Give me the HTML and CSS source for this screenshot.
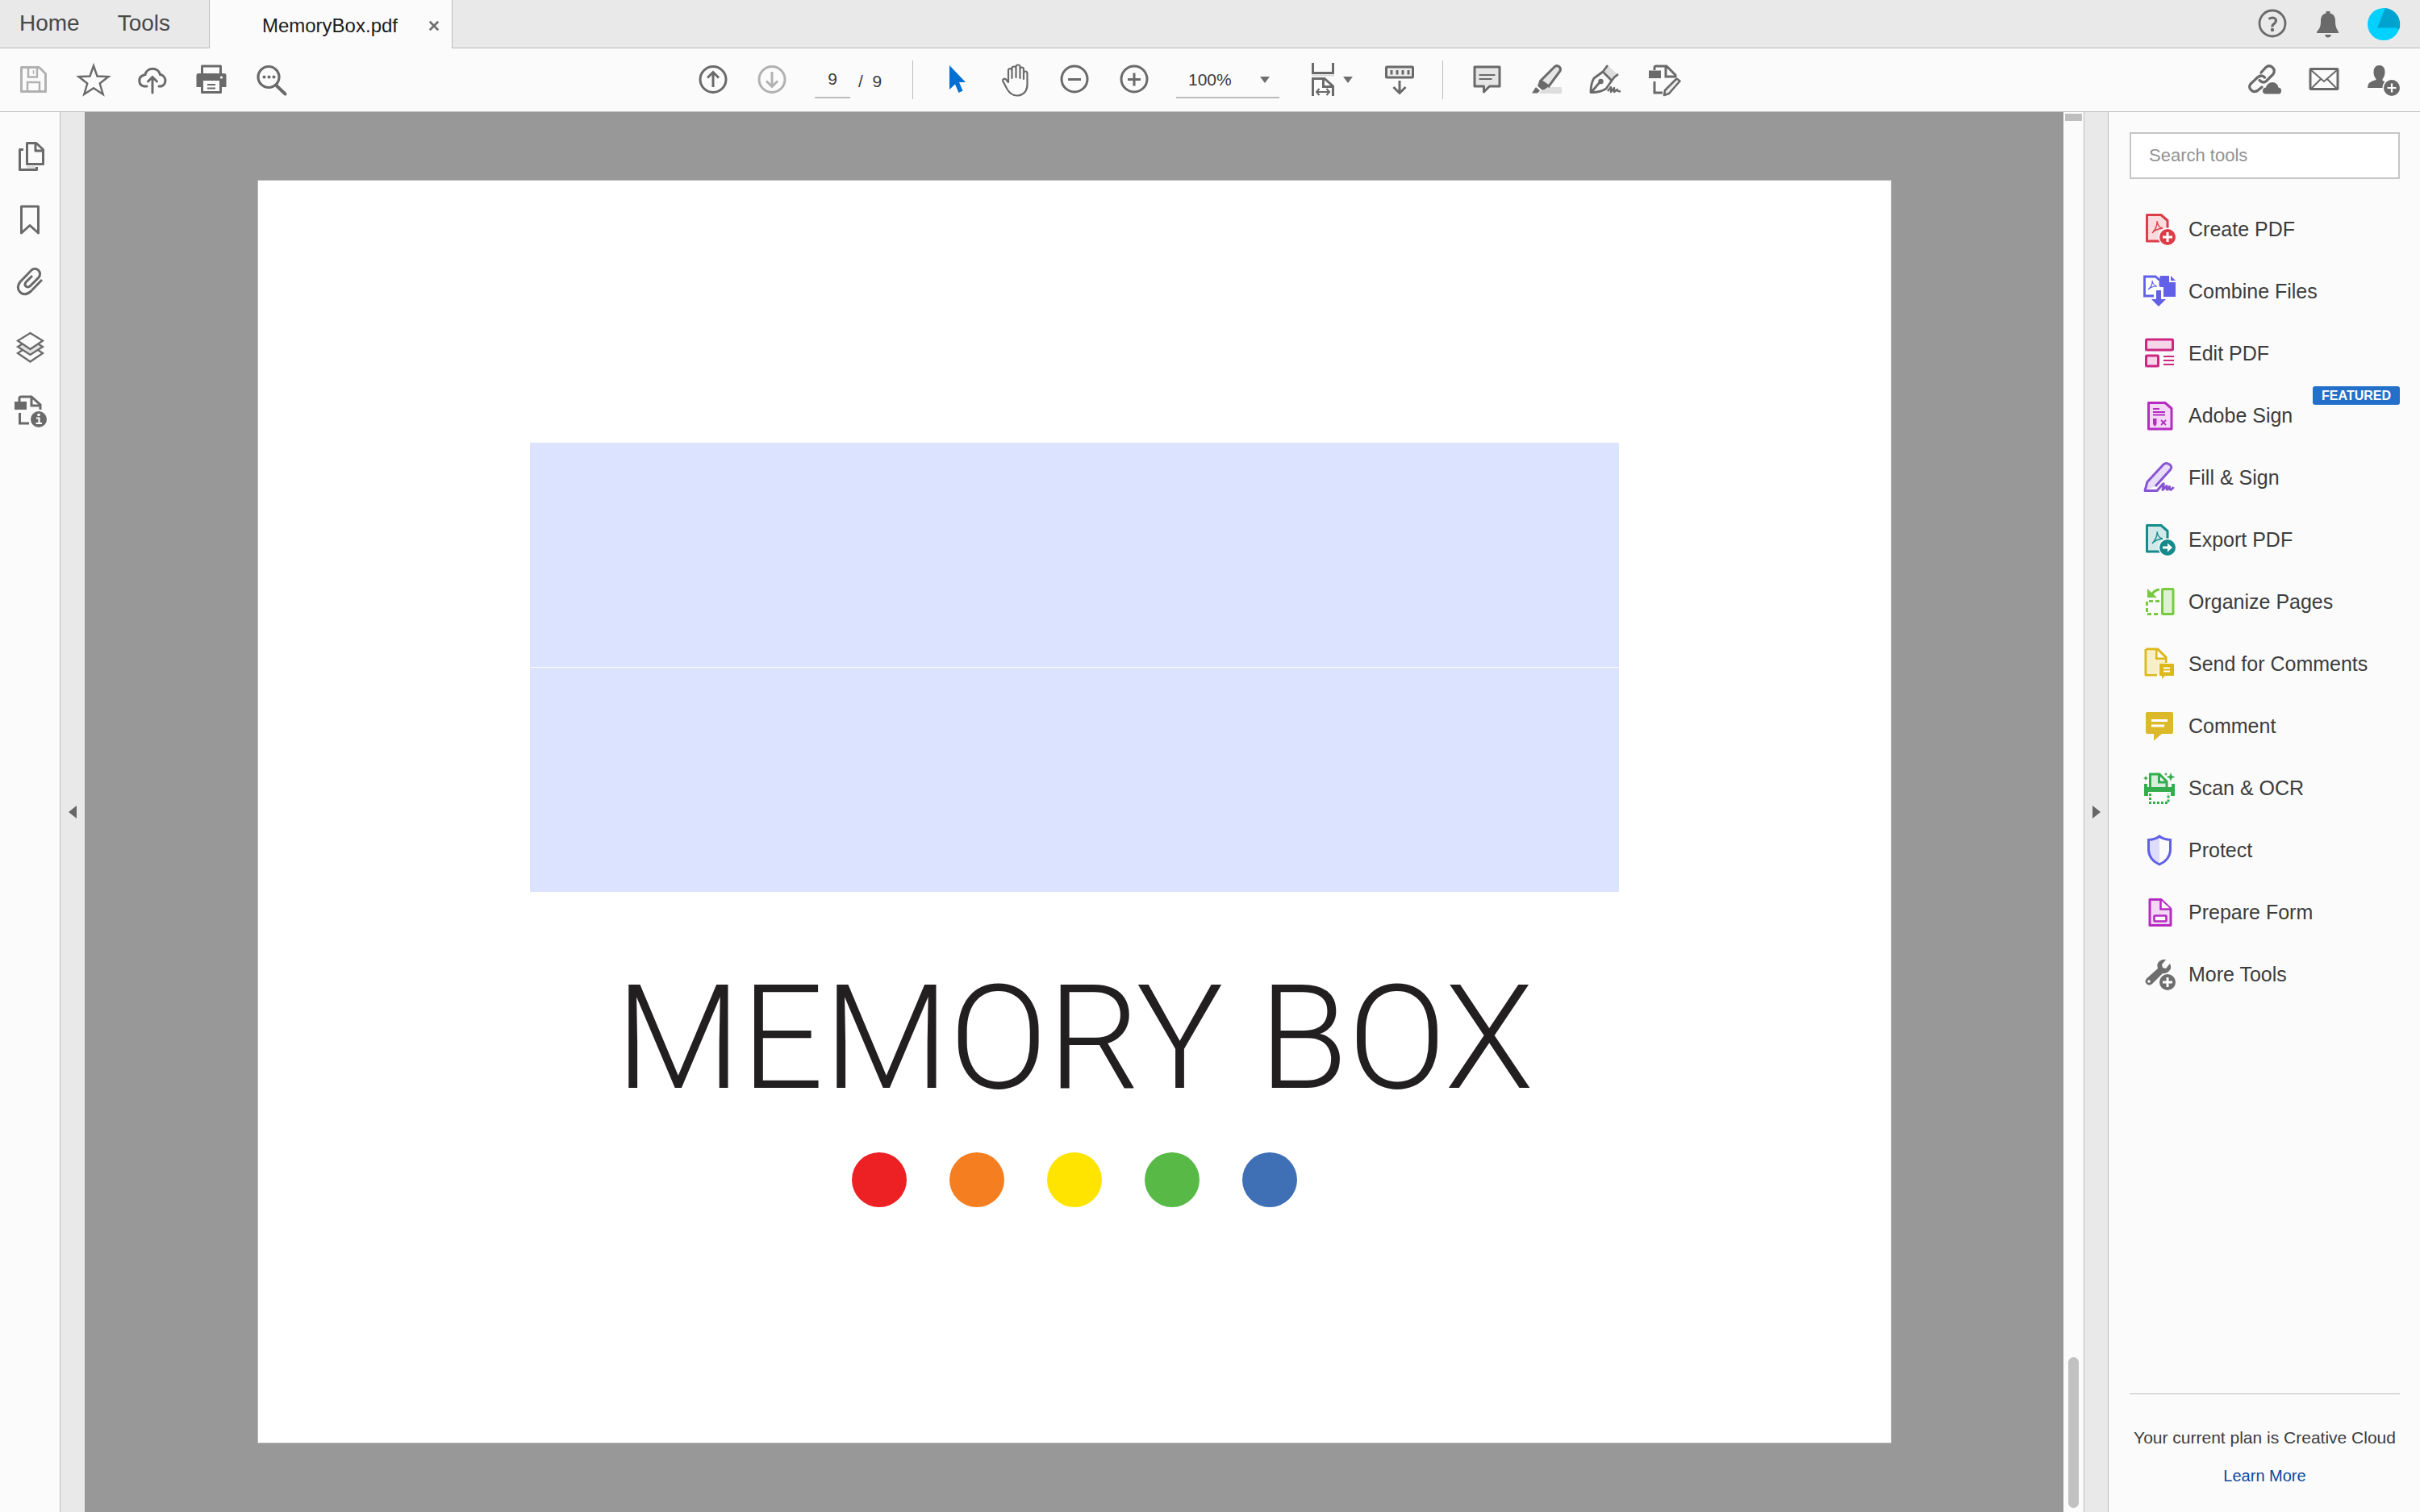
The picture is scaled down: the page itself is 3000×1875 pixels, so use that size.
FILE: index.html
```html
<!DOCTYPE html>
<html lang="en">
<head>
    <meta charset="UTF-8">
    <meta name="viewport" content="width=device-width, initial-scale=1.0">
    <title>MemoryBox.pdf</title>
    <link rel="stylesheet" href="styles.css">
</head>
<body>

    <!-- Tab bar -->
    <header class="tabbar">
        <nav class="tabs">
            <a href="#" class="tab-link">Home</a>
            <a href="#" class="tab-link">Tools</a>
        </nav>
        <div class="tab-file">
            <span>MemoryBox.pdf</span>
            <button class="tab-close" aria-label="Close">
                <svg width="14" height="14" viewBox="0 0 12 12"><path d="M1.500 1.500l9 9M10.500 1.500l-9 9" stroke="#6e6e6e" stroke-width="2.300"/></svg>
            </button>
        </div>
        <div class="account">
            <button class="icon" aria-label="Help">
                <svg viewBox="0 0 40 40"><circle cx="20" cy="19" r="16" fill="none" stroke="currentColor" stroke-width="2.800"/><path d="M15.500 13.500q4-2.500 7-1t1.500 4.500q-.5 1.500-2.500 3t-1.500 3.500" fill="none" stroke="currentColor" stroke-width="3"/><circle cx="20" cy="27" r="2.200" fill="currentColor"/></svg>
            </button>
            <button class="icon" aria-label="Notifications">
                <svg viewBox="0 0 40 40"><path d="M17.500 4h5v2.500c5 1 6.500 5 6.500 9.500 0 8 2 10 4 13.500V31H6v-1.500c3-3.500 5-5.500 5-13.500 0-4.500 1.500-8.500 6.500-9.500zM16 33h8q-1 3.500-4 3.500T16 33z" fill="currentColor"/></svg>
            </button>
            <button class="icon" aria-label="Profile">
                <svg viewBox="0 0 40 40"><circle cx="20" cy="20" r="20" fill="#00d1ff"/><path d="M22 .1A20 20 0 0 1 39 27q-2-3-5-2.500H12z" fill="#00a3cf"/></svg>
            </button>
        </div>
    </header>

    <!-- Toolbar -->
    <div class="toolbar">
        <div class="group group-file">
            <button class="icon dim" aria-label="Save">
                <svg viewBox="0 0 40 40" fill="none" stroke="currentColor" stroke-width="3"><path d="M4.500 4.500h22l8 8v22h-30z" stroke-linejoin="round"/><path d="M13 5v11.500h11V5M12 34v-11h15v11" stroke-width="2.500"/><path d="M19.500 8v5" stroke-width="1.500"/></svg>
            </button>
            <button class="icon" aria-label="Star">
                <svg viewBox="0 0 40 40"><path d="M20 2.500l4.500 13 14 .5-10.800 8.500 4 13.500L20 30.300 8.300 38l4-13.500L1.500 16l14-.5z" fill="none" stroke="currentColor" stroke-width="2.400"/></svg>
            </button>
            <button class="icon" aria-label="Upload">
                <svg viewBox="0 0 40 40" fill="none" stroke="currentColor" stroke-width="3" stroke-linecap="round"><path d="M12 28H8.500a7 7 0 0 1-1-13.500q1.500-1 2.500-1a9.500 9.500 0 0 1 18.500 0 7.500 7.500 0 0 1 1.500 14.500H27"/><path d="M19 36V17M13.500 22L19 16.500l5.500 5.500"/></svg>
            </button>
            <button class="icon" aria-label="Print">
                <svg viewBox="0 0 40 40"><path d="M6.500 13V3h23v10" fill="none" stroke="currentColor" stroke-width="3" stroke-linejoin="round"/><path d="M2 12h32q2.500 0 2.500 2.500V29H31v-8H6v8H-.5V14.500Q-.5 12 2 12z" fill="currentColor"/><path d="M6.500 21v14.500h23V21" fill="#fbfbfb" stroke="currentColor" stroke-width="3" stroke-linejoin="round"/><path d="M13 26h10M13 30.500h10" stroke="currentColor" stroke-width="1.800"/><circle cx="30.500" cy="17" r="1.600" fill="#fff"/></svg>
            </button>
            <button class="icon" aria-label="Find">
                <svg viewBox="0 0 40 40"><circle cx="15" cy="16.500" r="13" fill="none" stroke="currentColor" stroke-width="3.200"/><path d="M24.500 27l11 10.500" stroke="currentColor" stroke-width="4" stroke-linecap="round"/><g fill="currentColor"><circle cx="9.500" cy="16.500" r="2"/><circle cx="15.500" cy="16.500" r="2"/><circle cx="21.500" cy="16.500" r="2"/></g></svg>
            </button>
        </div>

        <div class="group group-view">
            <button class="icon" aria-label="Previous page">
                <svg viewBox="0 0 40 40" fill="none" stroke="currentColor" stroke-width="3"><circle cx="20" cy="19.500" r="16"/><path d="M20 29V11M13 17.500l7-7 7 7"/></svg>
            </button>
            <button class="icon dim" aria-label="Next page">
                <svg viewBox="0 0 40 40" fill="none" stroke="currentColor" stroke-width="3"><circle cx="20" cy="19.500" r="16"/><path d="M20 10v18M13 21.500l7 7 7-7"/></svg>
            </button>
            <div class="pager">
                <input type="text" value="9" aria-label="Page number">
                <span>/&nbsp; 9</span>
            </div>
            <i class="sep"></i>
            <button class="icon" aria-label="Select">
                <svg viewBox="0 0 40 40"><path d="M11 2l20 21h-8l4.500 10.500-5 2.500L18 25.500 11 32z" fill="#0070d2"/></svg>
            </button>
            <button class="icon" aria-label="Hand">
                <svg viewBox="0 0 40 40"><path d="M11 23V8.500q0-2.500 2-2.500t2.500 2.500V18V6q0-2.500 2.500-2.500T20.500 6v11V4q0-2.500 2.500-2.500T25.500 4v14V7q0-2.500 2.200-2.500T30 7v12V12q0-2.500 2.200-2.500t2.300 2.500v14c0 9-6 13.500-13 13.500-6 0-9-3-12-8L4.500 22c-1.500-3 2-4.500 4-2z" fill="none" stroke="currentColor" stroke-width="2.200" stroke-linejoin="round"/></svg>
            </button>
            <button class="icon" aria-label="Zoom out">
                <svg viewBox="0 0 40 40" fill="none" stroke="currentColor" stroke-width="3"><circle cx="20" cy="19" r="16"/><path d="M12 19.500h16"/></svg>
            </button>
            <button class="icon" aria-label="Zoom in">
                <svg viewBox="0 0 40 40" fill="none" stroke="currentColor" stroke-width="3"><circle cx="21" cy="19" r="16"/><path d="M13 19.500h16M21 11.500v16"/></svg>
            </button>
            <div class="zoom">
                <select aria-label="Zoom level"><option>100%</option></select>
                <svg class="caret" width="12" height="8" viewBox="0 0 12 8"><path d="M0 0h12L6 8z" fill="#6e6e6e"/></svg>
            </div>
            <button class="fit" aria-label="Fit width">
                <svg width="40" height="44" viewBox="0 0 40 44"><g fill="none" stroke="#6a6a6a" stroke-width="3"><path d="M8.500 1v12.500h25V1M8.500 42V20.500H23l10.500 9.500v12M21.500 21v9.500h12"/><path d="M13 37h16M16.500 33L13 37l3.500 4M25.500 33l3.500 4-3.500 4" stroke-width="2"/></g><path d="M7 15.500h28v2H7z" fill="#ddd"/></svg>
                <svg width="12" height="8" viewBox="0 0 12 8"><path d="M0 0h12L6 8z" fill="#6e6e6e"/></svg>
            </button>
            <button class="icon" aria-label="Scroll mode">
                <svg viewBox="0 0 40 40"><rect x="4.500" y="4" width="33" height="13" rx="1" fill="#eee" stroke="currentColor" stroke-width="3"/><path d="M11 8v5.500M18 8v5.500M25 8v5.500M32 8v5.500" stroke="currentColor" stroke-width="3"/><path d="M21 21v15M13.500 29l7.500 7.500 7.500-7.500" fill="none" stroke="currentColor" stroke-width="3"/></svg>
            </button>
            <i class="sep"></i>
            <button class="icon" aria-label="Comment">
                <svg viewBox="0 0 40 40"><path d="M5 4h31v24H23.500l-7 7v-7H5z" fill="#e6e6e6" stroke="currentColor" stroke-width="3" stroke-linejoin="round"/><path d="M10.500 14h20M10.500 19h16" stroke="currentColor" stroke-width="2"/></svg>
            </button>
            <button class="icon" aria-label="Highlight">
                <svg viewBox="0 0 40 40"><path d="M18 29h22v8H12z" fill="#ddd"/><path d="M31 4q2.500-2.500 5.500-.5T38 9L24 28l-10-7z" fill="#e6e6e6" stroke="currentColor" stroke-width="3"/><path d="M12.500 20.500l11 8-5 3.500-3 .5-5.500-5zM8 29l5 4.500-3 3H3z" fill="currentColor"/></svg>
            </button>
            <button class="icon" aria-label="Sign">
                <svg viewBox="0 0 40 40"><path d="M24 2l12 11-8 6-11-9z" fill="#ddd"/><g fill="none" stroke="currentColor" stroke-width="2.800" stroke-linejoin="round"><path d="M18 10l11 11-7 10q-8 5-19 4.500 0-11 4-17.500zM24 2l-6 8 11 11 3-4 5-4M4 35l11-13"/><path d="M24 34l4-5v6l4-5v5l4-3q0 3 4 2" stroke-width="2.400"/></g><circle cx="15.500" cy="22" r="3.200" fill="currentColor"/></svg>
            </button>
            <button class="icon" aria-label="Edit form">
                <svg viewBox="0 0 40 40"><g fill="none" stroke="currentColor" stroke-width="3"><path d="M9 8V5q0-2 2-2h13l11 11v3M23 3v13h12M9 22v14h10"/><path d="M36.500 18.500l4 3L27 37l-6 2 1-6z" fill="#eee" stroke-width="2.600" stroke-linejoin="round"/></g><path d="M2 8.500h15V18H2z" fill="currentColor"/></svg>
            </button>
        </div>

        <div class="group group-share">
            <button class="icon" aria-label="Share link">
                <svg viewBox="0 0 40 40"><g fill="none" stroke="currentColor" stroke-width="3.200" stroke-linecap="round"><path d="M16 11l6-6.500q4-3.500 8 0t1 8.500l-8.500 8.500q-4 3.500-8.500-1"/><path d="M20.500 17q-4-4-9 0L3 25q-3 4 .5 7.500t8 1L17 29"/></g><path d="M21 37.500q-3.500-1-3-4.500t4-3.500q2-6.500 8-6.500t7.500 6.500q4 .5 3.500 4.500t-3.500 3.500z" fill="currentColor" stroke="#fbfbfb" stroke-width="1.500" paint-order="stroke"/></svg>
            </button>
            <button class="icon" aria-label="Email">
                <svg viewBox="0 0 40 40" fill="none" stroke="currentColor"><rect x="3" y="6.500" width="34" height="25" rx="1" stroke-width="3"/><path d="M4 8l16 14L36 8M4 31l12-12M36 31L24 19" stroke-width="2"/></svg>
            </button>
            <button class="icon" aria-label="Add person">
                <svg viewBox="0 0 40 40"><path d="M14.500 2q7 0 7 8.500 0 5-3 8.500v2q7 2 8 9H0q0-8 10.500-10v-1q-3-3.500-3-8.500 0-8.500 7-8.500z" fill="currentColor"/><circle cx="30" cy="30" r="11.500" fill="#fbfbfb"/><circle cx="30" cy="30" r="10" fill="currentColor"/><path d="M24.500 30h11M30 24.500v11" stroke="#fff" stroke-width="2.200"/></svg>
            </button>
        </div>
    </div>

    <main class="workspace">
        <!-- Left navigation -->
        <nav class="sidebar">
            <button class="icon" aria-label="Pages">
                <svg viewBox="0 0 40 40"><g fill="none" stroke="currentColor" stroke-width="3" stroke-linejoin="round"><path d="M14.500 3.500H26l8.500 8v18h-20zM25 4v9h9"/><path d="M10 11.500H5.500v25h21V33"/></g><path d="M14 32h11v2.500H14z" fill="#ddd"/></svg>
            </button>
            <button class="icon" aria-label="Bookmarks">
                <svg viewBox="0 0 40 40"><path d="M7.500 3h21v33L18 26.500 7.500 36z" fill="none" stroke="currentColor" stroke-width="3" stroke-linejoin="round"/></svg>
            </button>
            <button class="icon" aria-label="Attachments">
                <svg viewBox="0 0 40 40"><path d="M33 15L19 29.500q-7 6-13 1-5.500-6 0-13L20 3q4-3.500 8.500 0 4 4.500.5 9L18 23q-3 2-5 0t0-5l8-8" fill="none" stroke="currentColor" stroke-width="3"/></svg>
            </button>
            <button class="icon" aria-label="Layers">
                <svg viewBox="0 0 40 40" stroke="currentColor" stroke-width="2.300"><path d="M18.500 16.500L34 27 18.500 37.500 3 27z" fill="#fbfbfb"/><path d="M18.500 9.500L34 19 18.500 29 3 19z" fill="#e2e2e2"/><path d="M18.500 2L34 11.500 18.500 22 3 11.500z" fill="#fbfbfb"/></svg>
            </button>
            <button class="icon" aria-label="Document info">
                <svg viewBox="0 0 40 40"><path d="M5 8V4q0-2 2-2h13l11 10v6M20 2v11h12M5.500 22v13H17" fill="none" stroke="currentColor" stroke-width="3"/><path d="M-1 8h15v10H-1z" fill="currentColor"/><circle cx="29" cy="30" r="10" fill="currentColor"/><circle cx="29" cy="24.500" r="1.800" fill="#fff"/><path d="M26 28.500h3.500v6.500M25.500 35h7.500" fill="none" stroke="#fff" stroke-width="2.200"/></svg>
            </button>
        </nav>
        <button class="strip strip-left" aria-label="Collapse navigation">
            <svg width="10" height="16" viewBox="0 0 10 16"><path d="M10 0v16L0 8z" fill="#666"/></svg>
        </button>

        <!-- Document -->
        <section class="viewer">
            <article class="page">
                <div class="fields">
                    <textarea aria-label="Memory box name, first part"></textarea>
                    <textarea aria-label="Memory box name, second part"></textarea>
                </div>
                <h1>MEMORY BOX</h1>
                <div class="dots">
                    <span class="dot red"></span>
                    <span class="dot orange"></span>
                    <span class="dot yellow"></span>
                    <span class="dot green"></span>
                    <span class="dot blue"></span>
                </div>
            </article>
        </section>
        <div class="scrollbar">
            <div class="scroll-top"></div>
            <div class="scroll-thumb"></div>
        </div>
        <button class="strip strip-right" aria-label="Collapse tools">
            <svg width="10" height="16" viewBox="0 0 10 16"><path d="M0 0v16l10-8z" fill="#666"/></svg>
        </button>

        <!-- Tools panel -->
        <aside class="tools">
            <input type="text" class="search" placeholder="Search tools" aria-label="Search tools">
            <ul class="tool-list">
                <li><a href="#">
                    <svg viewBox="0 0 40 40"><path d="M4.500 1.500H22l8 7v25.500H4.500z" fill="#fadcdf" stroke="#dc3d49" stroke-width="3" stroke-linejoin="round"/><path d="M17 9q1 7-6 15 4-5 13-6-6-1-7-9z" fill="none" stroke="#dc3d49" stroke-width="1.300"/><circle cx="30" cy="29" r="11.500" fill="#fbfbfb"/><circle cx="30" cy="29" r="10" fill="#dc3d49"/><path d="M24 29h12M30 23v12" stroke="#fff" stroke-width="3"/></svg>
                    Create PDF</a></li>
                <li><a href="#">
                    <svg viewBox="0 0 40 40"><path d="M13 25H1.500V1H15l6 5v7" fill="#fff" stroke="#6160e6" stroke-width="2.800"/><path d="M11 6q1 6-5 11 4-4 11-4-5-1-6-7z" fill="none" stroke="#6160e6" stroke-width="1.200"/><path d="M20.500 0H32v8h8v18H25V14h-4.500zM34 0l6 6h-6zM16 18h6v11h6l-9 9-9-9h6z" fill="#6160e6"/></svg>
                    Combine Files</a></li>
                <li><a href="#">
                    <svg viewBox="0 0 40 40"><g fill="#f6d5e8" stroke="#ce2783" stroke-width="3"><rect x="3.500" y="2" width="33" height="13" rx="1"/><rect x="3.500" y="22" width="15" height="13" rx="1"/></g><path d="M25 23h13M25 28h13M25 33h13" stroke="#ce2783" stroke-width="2"/></svg>
                    Edit PDF</a></li>
                <li><a href="#">
                    <svg viewBox="0 0 40 40"><path d="M6.500 3.500H27l8 7v25.500H6.500z" fill="#f3d8f6" stroke="#b62bc1" stroke-width="3" stroke-linejoin="round"/><path d="M12 11h8M12 15h15M12 18.500h15M22 25l6 6M28 25l-6 6" stroke="#b62bc1" stroke-width="1.800"/><path d="M12 23h4.500v7l-2 3-2.500-3z" fill="#b62bc1"/></svg>
                    Adobe Sign</a><span class="badge">FEATURED</span></li>
                <li><a href="#">
                    <svg viewBox="0 0 40 40"><path d="M2 35.500l3-11L23.500 3q3-3 7 0t3 6.500L15 30z" fill="#e8dcf7"/><path d="M15 30L33.500 9.500q3-3.500-1-6.500t-7.500 0L5 24.500 2 35.500h15l7-8q2-2 1 1l-1 6 5-5v4q1 2 3.500-3 0 5 2 3.500t3-3" fill="none" stroke="#8855d3" stroke-width="3" stroke-linejoin="round"/></svg>
                    Fill &amp; Sign</a></li>
                <li><a href="#">
                    <svg viewBox="0 0 40 40"><path d="M4.500 1.500H22l8 7v25.500H4.500z" fill="#d2e9e9" stroke="#168b8c" stroke-width="3" stroke-linejoin="round"/><path d="M17 9q1 7-6 15 4-5 13-6-6-1-7-9z" fill="none" stroke="#168b8c" stroke-width="1.300"/><circle cx="30" cy="29" r="11.500" fill="#fbfbfb"/><circle cx="30" cy="29" r="10" fill="#168b8c"/><path d="M24 27.500h6v-4l6 5.500-6 5.500v-4h-6z" fill="#fff"/></svg>
                    Export PDF</a></li>
                <li><a href="#">
                    <svg viewBox="0 0 40 40"><rect x="23.500" y="3.500" width="13.500" height="31" rx="1" fill="#def2d2" stroke="#77ca42" stroke-width="3"/><path d="M20 18.500H4.500v16H20" fill="none" stroke="#77ca42" stroke-width="3" stroke-dasharray="5 3"/><path d="M20 4q-7 1-9 6" fill="none" stroke="#77ca42" stroke-width="3"/><path d="M5 3v11h12z" fill="#77ca42"/></svg>
                    Organize Pages</a></li>
                <li><a href="#">
                    <svg viewBox="0 0 40 40"><path d="M3 1h15l10 10v7M16 1v12h12M3 1v32h14" fill="#f8efc9" stroke="#dcb918" stroke-width="3" stroke-linejoin="round"/><path d="M4.500 2.500H15V14h12v6h-8v12H4.500z" fill="#f8efc9"/><path d="M20 19h18v15H27l-4 4v-4h-3z" fill="#dcb918"/><path d="M25 24.500h8M25 28.500h8" stroke="#fff" stroke-width="1.800"/></svg>
                    Send for Comments</a></li>
                <li><a href="#">
                    <svg viewBox="0 0 40 40"><path d="M5 2h30q2 0 2 2v23q0 2-2 2H23l-10 8.500V29H5q-2 0-2-2V4q0-2 2-2z" fill="#dcb928"/><path d="M10 12.500h20M10 19h16" stroke="#fff" stroke-width="3"/></svg>
                    Comment</a></li>
                <li><a href="#">
                    <svg viewBox="0 0 40 40"><path d="M8.500 18V2H20l9 9v7M19.500 2v10h10" fill="#d5efda" stroke="#34ad4e" stroke-width="3"/><path d="M1 14h4v4h30v-4h4v15h-5v-5H6v5H1zM34 0l1.500 4 4 1.500-4 1.500-1.500 4-1.500-4-4-1.500 4-1.500zM3 4l1 2 2 1-2 1-1 2-1-2-2-1 2-1zM28 0l.7 1.300L30 2l-1.300.7L28 4l-.7-1.300L26 2l1.300-.7z" fill="#34ad4e"/><path d="M8.500 26v11.500H31V26" fill="none" stroke="#34ad4e" stroke-width="3" stroke-dasharray="3 2"/></svg>
                    Scan &amp; OCR</a></li>
                <li><a href="#">
                    <svg viewBox="0 0 40 40"><path d="M20 2v35Q7 31 6.500 19V6.500Q15 6 20 2z" fill="#dddcfa"/><path d="M20 2q5 4 13.500 4.500V19Q33 31 20 37 7 31 6.500 19V6.500Q15 6 20 2z" fill="none" stroke="#6160e6" stroke-width="3"/></svg>
                    Protect</a></li>
                <li><a href="#">
                    <svg viewBox="0 0 40 40"><path d="M8 3.500h14L34 15v20.500H8z" fill="#f3d8f6" stroke="#b62bc1" stroke-width="3" stroke-linejoin="round"/><path d="M21.500 4v11.500H34" fill="#fff" stroke="#b62bc1" stroke-width="2.600"/><rect x="13.500" y="23.500" width="15" height="7" rx="1" fill="#fff" stroke="#b62bc1" stroke-width="2.600"/></svg>
                    Prepare Form</a></li>
                <li><a href="#">
                    <svg viewBox="0 0 40 40"><path d="M28 1l-5 6 1 4 4 1 5-6q3 6-2 10-3 3-7 2L11 31q-4 3-7 0t0-6.500L18 12q-2-6 2-9 4-3 8-2z" fill="#6e6e6e"/><circle cx="7" cy="28" r="1.800" fill="#fff"/><circle cx="30" cy="29" r="11.500" fill="#fbfbfb"/><circle cx="30" cy="29" r="10" fill="#6e6e6e"/><path d="M24 29h12M30 23v12" stroke="#fff" stroke-width="3"/></svg>
                    More Tools</a></li>
            </ul>
            <footer class="plan">
                <p>Your current plan is Creative Cloud</p>
                <a href="#">Learn More</a>
            </footer>
        </aside>
    </main>

</body>
</html>
```
FILE: styles.css
```css
* {
    box-sizing: border-box;
}

body {
    margin: 0;
    height: 100vh;
    display: flex;
    flex-direction: column;
    overflow: hidden;
    font-family: "Liberation Sans", Arial, sans-serif;
    color: #3c3c3c;
    background-color: #fbfbfb;
}

button {
    padding: 0;
    border: none;
    background: none;
    color: #6a6a6a;
    cursor: pointer;
}

svg {
    display: block;
    flex-shrink: 0;
}

.icon {
    width: 40px;
    height: 40px;
    flex-shrink: 0;
}

.icon svg {
    width: 40px;
    height: 40px;
    overflow: visible;
}

.icon.dim {
    color: #b1b1b1;
}

/* Tab bar */
.tabbar {
    display: flex;
    height: 60px;
    background-color: #e9e9e9;
}

.tabs {
    display: flex;
    gap: 47px;
    width: 259px;
    padding: 0 24px;
    border-bottom: 1px solid #bcbcbc;
}

.tab-link {
    font-size: 28px;
    line-height: 58px;
    color: #484848;
    text-decoration: none;
}

.tab-file {
    display: flex;
    align-items: center;
    justify-content: flex-end;
    gap: 38px;
    width: 302px;
    padding: 4px 15px 0 0;
    font-size: 24px;
    color: #1c1c1c;
    background-color: #fbfbfb;
    border-left: 1px solid #bcbcbc;
    border-right: 1px solid #bcbcbc;
}

.account {
    flex: 1;
    display: flex;
    align-items: center;
    justify-content: flex-end;
    gap: 29px;
    padding-right: 25px;
    border-bottom: 1px solid #bcbcbc;
}

/* Toolbar */
.toolbar {
    display: flex;
    align-items: center;
    height: 79px;
    border-bottom: 1px solid #bcbcbc;
}

.group {
    display: flex;
    align-items: center;
}

.group-file {
    width: 28.8%;
    gap: 34px;
    padding-left: 22px;
}

.group-view {
    gap: 33px;
}

.group-share {
    gap: 34px;
    margin-left: auto;
    padding-right: 25px;
}

.pager {
    display: flex;
    align-items: center;
    width: 87px;
    gap: 10px;
    font-size: 21px;
}

.pager input {
    width: 44px;
    height: 46px;
    padding: 0;
    border: none;
    border-bottom: 2px solid #bcbcbc;
    background: none;
    font: inherit;
    text-align: center;
    color: inherit;
}

.pager span {
    padding-top: 4px;
    white-space: nowrap;
}

.sep {
    width: 1px;
    height: 48px;
    margin: 0 1px;
    background-color: #bcbcbc;
}

.zoom {
    position: relative;
    width: 128px;
}

.zoom select {
    appearance: none;
    width: 100%;
    height: 46px;
    padding: 0 15px;
    border: none;
    border-bottom: 2px solid #bcbcbc;
    border-radius: 0;
    background: none;
    font: inherit;
    font-size: 21px;
    color: inherit;
}

.caret {
    position: absolute;
    top: 19px;
    right: 12px;
}

.fit {
    display: flex;
    align-items: center;
    gap: 6px;
    width: 62px;
}

/* Workspace */
.workspace {
    flex: 1;
    display: flex;
    min-height: 0;
}

.sidebar {
    display: flex;
    flex-direction: column;
    align-items: center;
    gap: 39px;
    width: 74px;
    padding: 35px 0 0 4px;
}

.strip {
    display: flex;
    align-items: center;
    justify-content: center;
    width: 31px;
    background-color: #e9e9e9;
    border-left: 1px solid #bcbcbc;
}

.strip-right {
    border-right: 1px solid #bcbcbc;
}

.viewer {
    flex: 1;
    display: flex;
    padding: 84px 213px 85px 214px;
    background-color: #989898;
}

.page {
    flex: 1;
    display: flex;
    flex-direction: column;
    align-items: center;
    padding-top: 325px;
    background-color: #fff;
    border: 1px solid #b4b4b4;
}

.fields {
    display: grid;
    gap: 1px;
    width: 66.67%;
}

.fields textarea {
    display: block;
    width: 100%;
    height: 278px;
    border: none;
    resize: none;
    background-color: #dce3ff;
}

.page h1 {
    margin: 82px 0 41px;
    font-family: Roboto, "Liberation Sans", sans-serif;
    font-size: 180px;
    font-weight: 300;
    line-height: 200px;
    white-space: nowrap;
    color: #211f20;
}

.dots {
    display: flex;
    gap: 53px;
}

.dot {
    width: 68px;
    height: 68px;
    border-radius: 50%;
}

.red { background-color: #ed2024; }
.orange { background-color: #f57f20; }
.yellow { background-color: #ffe400; }
.green { background-color: #59b947; }
.blue { background-color: #3f6fb5; }

.scrollbar {
    display: flex;
    flex-direction: column;
    align-items: center;
    justify-content: space-between;
    width: 25px;
    padding: 2px 2px 5px;
}

.scroll-top {
    width: 21px;
    height: 9px;
    background-color: #bebebe;
}

.scroll-thumb {
    width: 13px;
    height: 187px;
    border-radius: 7px;
    background-color: #c1c1c1;
}

/* Tools panel */
.tools {
    display: flex;
    flex-direction: column;
    width: 386px;
    padding: 25px 25px 0 26px;
}

.search {
    height: 58px;
    padding: 0 22px;
    border: 2px solid #c6c6c6;
    font: inherit;
    font-size: 22px;
    background-color: #fff;
}

.search::placeholder {
    color: #929292;
}

.tool-list {
    margin: 24px 0 0;
    padding: 0;
    list-style: none;
}

.tool-list li {
    position: relative;
}

.tool-list a {
    display: flex;
    align-items: center;
    gap: 16px;
    height: 77px;
    padding-left: 17px;
    font-size: 25px;
    color: #3c3c3c;
    text-decoration: none;
}

.tool-list svg {
    width: 40px;
    height: 40px;
    overflow: visible;
}

.badge {
    position: absolute;
    top: 2px;
    right: 0;
    padding: 0 11px;
    border-radius: 3px;
    background-color: #2270c9;
    color: #fff;
    font-size: 16px;
    font-weight: bold;
    line-height: 23px;
}

.plan {
    height: 147px;
    margin-top: auto;
    border-top: 1px solid #bcbcbc;
    text-align: center;
    white-space: nowrap;
}

.plan p {
    margin: 42px 0 23px;
    font-size: 21px;
    line-height: 24px;
}

.plan a {
    display: block;
    font-size: 20px;
    line-height: 24px;
    color: #0d479e;
    text-decoration: none;
}
```
